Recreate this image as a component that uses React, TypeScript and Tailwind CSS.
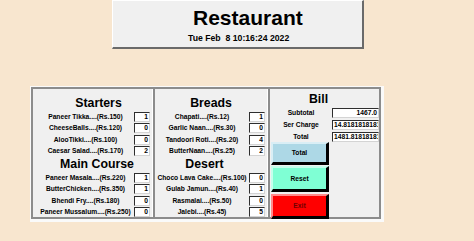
import React from "react";

type Item = [string, string];

const starters: Item[] = [
  ["Paneer Tikka....(Rs.150)", "1"],
  ["CheeseBalls....(Rs.120)", "0"],
  ["AlooTikki....(Rs.100)", "0"],
  ["Caesar Salad....(Rs.170)", "2"],
];
const mains: Item[] = [
  ["Paneer Masala....(Rs.220)", "1"],
  ["ButterChicken....(Rs.350)", "1"],
  ["Bhendi Fry....(Rs.180)", "0"],
  ["Paneer Mussalum....(Rs.250)", "0"],
];
const breads: Item[] = [
  ["Chapati....(Rs.12)", "1"],
  ["Garlic Naan....(Rs.30)", "0"],
  ["Tandoori Roti....(Rs.20)", "4"],
  ["ButterNaan....(Rs.25)", "2"],
];
const desserts: Item[] = [
  ["Choco Lava Cake....(Rs.100)", "0"],
  ["Gulab Jamun....(Rs.40)", "1"],
  ["Rasmalai....(Rs.50)", "0"],
  ["Jalebi....(Rs.45)", "5"],
];

function Entry({ value, w = "w-[16px]", align = "text-right" }: { value: string; w?: string; align?: string }) {
  return (
    <div
      className={`${w} h-[10px] bg-white border border-t-[#2e2e2e] border-l-[#2e2e2e] border-r-[#d4d4d4] border-b-[#d4d4d4] overflow-hidden whitespace-nowrap ${align} text-[6.7px] leading-[8px] px-[1px] font-bold text-black`}
    >
      {value}
    </div>
  );
}

function Row({ label, value, labelPad }: { label: string; value: string; labelPad: string }) {
  return (
    <div className="flex items-start h-[11.3px]">
      <div className={`flex-1 text-center text-[6.7px] leading-[10px] font-bold whitespace-nowrap ${labelPad}`}>{label}</div>
      <div className="mr-[2px]">
        <Entry value={value} />
      </div>
    </div>
  );
}

function Heading({ children, cls }: { children: React.ReactNode; cls: string }) {
  return <div className={`h-[14px] text-[12.3px] leading-[14px] font-bold text-center whitespace-nowrap ${cls}`}>{children}</div>;
}

export default function App() {
  return (
    <div
      className="w-[474px] h-[241px] bg-[#f8e6cf] overflow-hidden text-black"
      style={{ fontFamily: '"Liberation Sans", Arial, sans-serif' }}
    >
      {/* header */}
      <div className="ml-[112px] w-[252px] h-[49px] bg-[#f0f0f0] border-l border-t border-white border-r-2 border-b-2 border-r-[#6a6a6a] border-b-[#6a6a6a] flex flex-col">
        <div className="pt-[5px] pl-[80px] h-[29px] text-[21px] leading-[24px] font-bold">Restaurant</div>
        <div className="mt-[3px] pl-[75px] text-[8.7px] leading-[11px] font-bold whitespace-pre">Tue Feb  8 10:16:24 2022</div>
      </div>

      {/* main frame */}
      <div className="mt-[37px] ml-[30px] w-[354px] h-[136px] border-l border-t border-[#fafafa] border-r-[3px] border-b-[3px]">
        <div className="w-full h-full border-2 border-[#8c8c8c] bg-[#f0f0f0] flex">
          {/* col 1 */}
          <div className="w-[120px] h-full border-r border-white flex flex-col pt-[7px]">
            <Heading cls="pl-[12px]">Starters</Heading>
            <div className="mt-[2px]">
              {starters.map(([l, v]) => (
                <Row key={l} label={l} value={v} labelPad="pl-[4px]" />
              ))}
            </div>
            <Heading cls="pl-[9px]">Main Course</Heading>
            <div className="mt-[1.8px]">
              {mains.map(([l, v]) => (
                <Row key={l} label={l} value={v} labelPad="pl-[4px]" />
              ))}
            </div>
          </div>

          {/* col 2 */}
          <div className="w-[115px] h-full border-l-2 border-l-[#8c8c8c] border-r border-r-white flex flex-col pt-[7px]">
            <Heading cls="">Breads</Heading>
            <div className="mt-[2px]">
              {breads.map(([l, v]) => (
                <Row key={l} label={l} value={v} labelPad="" />
              ))}
            </div>
            <Heading cls="pr-[13px]">Desert</Heading>
            <div className="mt-[1.8px]">
              {desserts.map(([l, v]) => (
                <Row key={l} label={l} value={v} labelPad="" />
              ))}
            </div>
          </div>

          {/* col 3 */}
          <div className="flex-1 h-full border-l-2 border-l-[#8c8c8c] flex flex-col pt-[3px]">
            <Heading cls="pr-[12px]">Bill</Heading>
            <div className="mt-[2px]">
              {[
                ["Subtotal", "1467.0", "text-right"],
                ["Ser Charge", "14.81818181818", "text-left"],
                ["Total", "1481.81818181", "text-left"],
              ].map(([l, v, a], i) => (
                <div key={l} className={`flex items-start ${i < 2 ? "h-[11.8px]" : "h-[10px]"}`}>
                  <div className="flex-1 text-center text-[6.7px] leading-[10px] font-bold whitespace-nowrap">{l}</div>
                  <Entry value={v} w="w-[47px]" align={a} />
                </div>
              ))}
            </div>
            <div className="ml-[1px] flex flex-col gap-[1.5px]">
              <div className="w-[58px] h-[23px] bg-[#add8e6] border-t-2 border-l-2 border-t-[#d9eef5] border-l-[#d9eef5] border-r-[3px] border-b-[3px] border-r-black border-b-black flex items-center justify-center text-[6.7px] font-bold">
                Total
              </div>
              <div className="w-[58px] h-[26px] bg-[#7fffd4] border-t-2 border-l-2 border-t-[#c4ffec] border-l-[#c4ffec] border-r-[3px] border-b-[3px] border-r-black border-b-black flex items-center justify-center text-[6.7px] font-bold">
                Reset
              </div>
              <div className="w-[58px] h-[25px] bg-[#ff0000] border-t-2 border-l-2 border-t-[#ff8a8a] border-l-[#ff8a8a] border-r-[3px] border-b-[3px] border-r-black border-b-black flex items-center justify-center text-[6.7px] font-bold text-[#700000]">
                Exit
              </div>
            </div>
          </div>
        </div>
      </div>
    </div>
  );
}
